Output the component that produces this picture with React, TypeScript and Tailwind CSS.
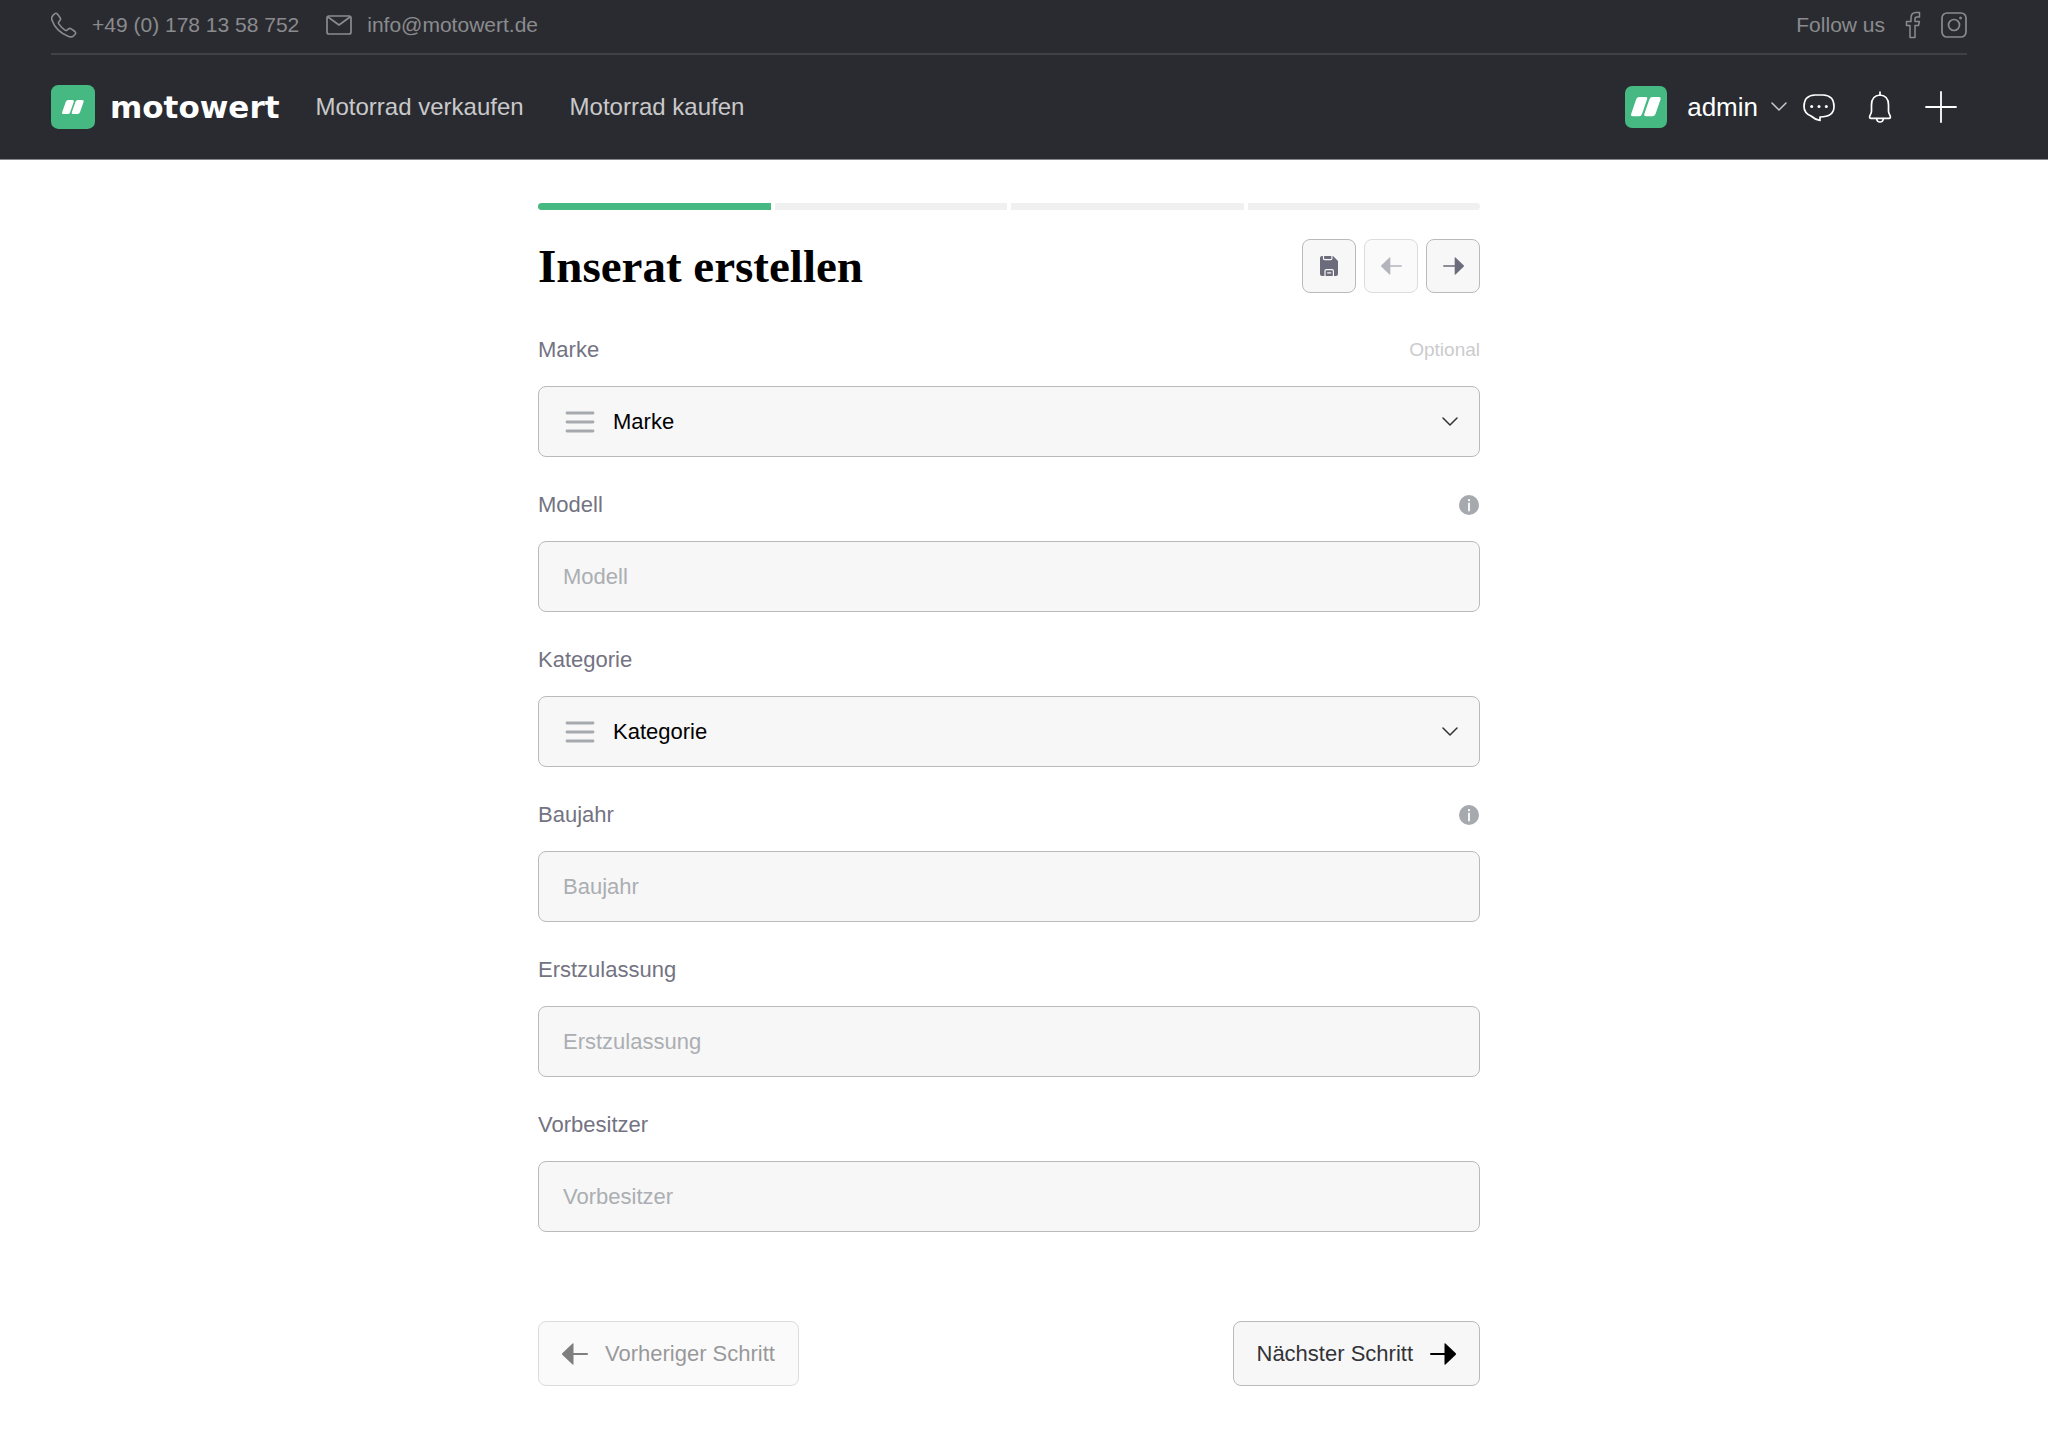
import type { ReactNode } from "react";

function LogoMark({ className, big }: { className: string; big?: boolean }) {
  return (
    <svg viewBox="0 0 42 42" className={className} aria-hidden="true">
      <rect width="42" height="42" rx="7" fill="#46b881" />
      <g fill="#fff" transform={big ? undefined : "translate(21 21) scale(0.7) translate(-21 -20.6)"}>
        <path d="M14.500 11h6q2.400 0 1.600 2.300l-5 14.500Q16.300 30.300 14 30.300H8q-2.700 0-1.800-2.500l5-14.500Q12 11 14.500 11z" />
        <path d="M27.600 11h6q2.700 0 1.900 2.400l-5 14.500q-.8 2.400-3.300 2.400h-6q-2.700 0-1.800-2.500l5-14.500Q25.200 11 27.600 11z" />
      </g>
    </svg>
  );
}

const line = { fill: "none", stroke: "currentColor", strokeLinecap: "round", strokeLinejoin: "round" } as const;

function PhoneIcon() {
  return (
    <svg viewBox="0 0 26 26" className="size-[26px]" {...line} strokeWidth="1.600" aria-hidden="true">
      <path d="M2 3.400 3.400 2Q5 .4 6.400 2l2.700 3.700q1 1.500-.1 2.700l-1.200 1.400q-.8.9 0 2.100 2.500 3.800 6.200 6.200 1.200.8 2.100 0l1.400-1.200q1.200-1.100 2.700-.1l3.700 2.700q1.600 1.400 0 3l-1.300 1.300q-1.900 1.800-5 .7Q11.500 22.200 7.100 17.900 2.800 13.600.9 8.100.1 5.300 2 3.400z" />
    </svg>
  );
}

function MailIcon() {
  return (
    <svg viewBox="0 0 26 20" className="h-5 w-[26px]" {...line} strokeWidth="1.700" aria-hidden="true">
      <rect x="1" y="1" width="24" height="18" rx="2" />
      <path d="M2 2l11 8 11-8" />
    </svg>
  );
}

function FacebookIcon() {
  return (
    <svg viewBox="0 0 16 28" className="h-7 w-4" {...line} strokeWidth="1.500" aria-hidden="true">
      <path d="M14.500 1.500h-3.500q-5 0-5 5.500v3.500H1.500v4H5v12h5v-12h3.500l.9-4h-4.400V8q0-2 2-2h2.500z" />
    </svg>
  );
}

function InstagramIcon() {
  return (
    <svg viewBox="0 0 26 26" className="size-[26px]" {...line} strokeWidth="1.700" aria-hidden="true">
      <rect x="1" y="1" width="24" height="24" rx="5" />
      <circle cx="13" cy="13" r="5.500" />
      <circle cx="19.500" cy="6" r="1" fill="currentColor" strokeWidth="0.800" />
    </svg>
  );
}

function Chevron({ className }: { className?: string }) {
  return (
    <svg viewBox="0 0 16 10" className={className} {...line} strokeWidth="1.500" aria-hidden="true">
      <path d="M1 1l7 7 7-7" />
    </svg>
  );
}

function ChatIcon() {
  return (
    <svg viewBox="0 0 32 32" className="size-8" {...line} strokeWidth="1.700" aria-hidden="true">
      <path d="M12 4h8q11 .5 11 11.500 0 10.500-14 10.500V29.500q-5-1-9-4.500-7-3-7-9.500Q1 4.500 12 4z" />
      <g fill="currentColor" stroke="none">
        <circle cx="8.700" cy="15.500" r="1.500" />
        <circle cx="16" cy="15.500" r="1.500" />
        <circle cx="23.300" cy="15.500" r="1.500" />
      </g>
    </svg>
  );
}

function BellIcon() {
  return (
    <svg viewBox="0 0 24 32" className="h-8 w-6" {...line} strokeWidth="1.700" aria-hidden="true">
      <path d="M12 1v3M12 4q8.500.5 8.500 10v6q0 2 1.500 4.500 1.200 2.800-1.200 2.800h-17.600q-2.400 0-1.200-2.800Q3.500 22 3.500 20v-6q0-9.500 8.500-10z" />
      <path d="M8.500 27.500q.5 3.500 3.500 3.500t3.500-3.500" />
    </svg>
  );
}

function PlusIcon() {
  return (
    <svg viewBox="0 0 32 32" className="size-8" {...line} strokeWidth="1.800" aria-hidden="true">
      <path d="M16 1v30M1 16h30" />
    </svg>
  );
}

function SaveIcon() {
  return (
    <svg viewBox="0 0 20 22" className="h-[22px] w-5" aria-hidden="true">
      <path fill="#6b6b7b" d="M1 3q0-2 2-2h11l5 5v13q0 2-2 2H3q-2 0-2-2z" />
      <path fill="none" stroke="#f7f7f7" strokeWidth="1.200" strokeLinejoin="round" d="M4.500 1v2.500q0 1.200 1.200 1.200h6q1.200 0 1.200-1.200V1M6 21v-5q0-1.300 1.300-1.300h5.800q1.300 0 1.300 1.300v5M8.200 17.800h4" />
    </svg>
  );
}

function Arrow({ left, className }: { left?: boolean; className: string }) {
  return (
    <svg viewBox="0 0 26 22" className={className} aria-hidden="true">
      <g fill="currentColor" transform={left ? "translate(26 0) scale(-1 1)" : undefined}>
        <rect x="0" y="10" width="16" height="2" rx="1" />
        <path d="M14.500 1q0-1.200 1-.4l10 9.400q1 1 0 2l-10 9.400q-1 .8-1-.4z" />
      </g>
    </svg>
  );
}

function MenuIcon() {
  return (
    <svg viewBox="0 0 30 22" className="h-[22px] w-[30px]" {...line} stroke="#a6a9ae" strokeWidth="2.800" aria-hidden="true">
      <path d="M2 2h26M2 11h26M2 20h26" />
    </svg>
  );
}

function InfoIcon() {
  return (
    <svg viewBox="0 0 20 20" className="size-5" aria-hidden="true">
      <circle cx="10" cy="10" r="10" fill="#a6a9ae" />
      <circle cx="10" cy="5.200" r="1.100" fill="#fff" />
      <path d="M10 8.500v7" stroke="#fff" strokeWidth="1.800" strokeLinecap="round" />
    </svg>
  );
}

type FieldProps = { id: string; label: string; kind: "select" | "text"; hint?: ReactNode };

function Field({ id, label, kind, hint }: FieldProps) {
  return (
    <div className="flex flex-col gap-[22px]">
      <div className="flex h-7 items-center justify-between">
        <label htmlFor={id} className="text-[22px] leading-7 text-[#737382]">{label}</label>
        {hint}
      </div>
      {kind === "select" ? (
        <div className="relative">
          <select
            id={id}
            className="h-[71px] w-full appearance-none rounded-lg border border-[#b9babe] bg-[#f7f7f7] pr-12 pl-[74px] text-[22px] text-black"
          >
            <option>{label}</option>
          </select>
          <span className="pointer-events-none absolute inset-y-0 left-[27px] flex items-center"><MenuIcon /></span>
          <span className="pointer-events-none absolute inset-y-0 right-[22px] flex items-center text-[#333]">
            <Chevron className="h-[10px] w-4" />
          </span>
        </div>
      ) : (
        <input
          id={id}
          type="text"
          placeholder={label}
          className="h-[71px] w-full rounded-lg border border-[#b9babe] bg-[#f7f7f7] px-6 text-[22px] text-black placeholder:text-[#abaeb2]"
        />
      )}
    </div>
  );
}

const info = (
  <button type="button" aria-label="Info" className="mr-px">
    <InfoIcon />
  </button>
);

const fields: FieldProps[] = [
  { id: "marke", label: "Marke", kind: "select", hint: <span className="text-[19px] text-[#cbcbcd]">Optional</span> },
  { id: "modell", label: "Modell", kind: "text", hint: info },
  { id: "kategorie", label: "Kategorie", kind: "select" },
  { id: "baujahr", label: "Baujahr", kind: "text", hint: info },
  { id: "erstzulassung", label: "Erstzulassung", kind: "text" },
  { id: "vorbesitzer", label: "Vorbesitzer", kind: "text" },
];

const squareButton =
  "flex size-[54px] items-center justify-center rounded-lg border border-[#b9babe] bg-[#f7f7f7] text-[#6b6b7b] disabled:opacity-50";
const stepButton =
  "flex h-[65px] items-center gap-[17px] rounded-lg border border-[#b9babe] bg-[#f7f7f7] px-[23px] text-[22px] disabled:opacity-50";

export default function App() {
  return (
    <div className="min-h-screen bg-white font-['Liberation_Sans',Arial,sans-serif]">
      <header className="border-b border-[#85858a] bg-[#2a2b30] pr-[81px] pl-[51px]">
        <div className="flex h-[55px] items-center justify-between border-b-2 border-[#404146] pb-1 text-[21px] text-[#8a8b8e]">
          <div className="flex items-center gap-[27px]">
            <a href="tel:+4917813587520" className="flex items-center gap-[15px]">
              <PhoneIcon />
              +49 (0) 178 13 58 752
            </a>
            <a href="mailto:info@motowert.de" className="flex items-center gap-[15px]">
              <MailIcon />
              info@motowert.de
            </a>
          </div>
          <div className="flex items-center gap-5">
            <span>Follow us</span>
            <a href="#facebook" aria-label="Facebook"><FacebookIcon /></a>
            <a href="#instagram" aria-label="Instagram"><InstagramIcon /></a>
          </div>
        </div>
        <div className="flex h-[104px] items-center justify-between">
          <div className="flex items-center">
            <a href="#home" className="flex items-center gap-[15px]">
              <LogoMark className="size-11" />
              <span className="font-['DejaVu_Sans',Verdana,sans-serif] text-[31px] leading-10 font-bold text-white">motowert</span>
            </a>
            <nav className="ml-9 flex gap-[46px] text-[24px] text-[#c9c9cb]">
              <a href="#verkaufen">Motorrad verkaufen</a>
              <a href="#kaufen">Motorrad kaufen</a>
            </nav>
          </div>
          <div className="flex items-center text-white">
            <button type="button" className="flex items-center text-[26px]">
              <LogoMark className="mr-5 size-[42px]" big />
              admin
              <Chevron className="ml-[13px] h-[10px] w-4 text-[#c9c9cb]" />
            </button>
            <button type="button" aria-label="Nachrichten" className="ml-4"><ChatIcon /></button>
            <button type="button" aria-label="Benachrichtigungen" className="ml-[33px]"><BellIcon /></button>
            <button type="button" aria-label="Neu" className="mr-2.5 ml-[33px]"><PlusIcon /></button>
          </div>
        </div>
      </header>

      <main className="pr-[30px]">
        <form className="mx-auto w-full max-w-[942px] pt-[43px]">
          <div className="grid grid-cols-4 gap-1 overflow-hidden rounded-full">
            <div className="h-[7px] bg-[#46b881]" />
            <div className="h-[7px] bg-[#f0f0f0]" />
            <div className="h-[7px] bg-[#f0f0f0]" />
            <div className="h-[7px] bg-[#f0f0f0]" />
          </div>

          <div className="mt-[29px] flex items-center justify-between">
            <h1 className="font-['Liberation_Serif','Times_New_Roman',serif] text-[47px] leading-[54px] font-bold text-black">
              Inserat erstellen
            </h1>
            <div className="flex gap-2">
              <button type="button" aria-label="Speichern" className={squareButton}><SaveIcon /></button>
              <button type="button" aria-label="Zurück" disabled className={squareButton}>
                <Arrow left className="h-[18px] w-[21px]" />
              </button>
              <button type="button" aria-label="Weiter" className={squareButton}>
                <Arrow className="h-[18px] w-[21px]" />
              </button>
            </div>
          </div>

          <div className="mt-[43px] flex flex-col gap-[34px]">
            {fields.map((f) => <Field key={f.id} {...f} />)}
          </div>

          <div className="mt-[89px] flex justify-between">
            <button type="button" disabled className={stepButton}>
              <Arrow left className="h-[22px] w-[26px] text-black" />
              <span className="text-[#333338]">Vorheriger Schritt</span>
            </button>
            <button type="button" className={stepButton}>
              <span className="text-[#333338]">Nächster Schritt</span>
              <Arrow className="h-[22px] w-[26px] text-black" />
            </button>
          </div>
        </form>
      </main>
    </div>
  );
}
